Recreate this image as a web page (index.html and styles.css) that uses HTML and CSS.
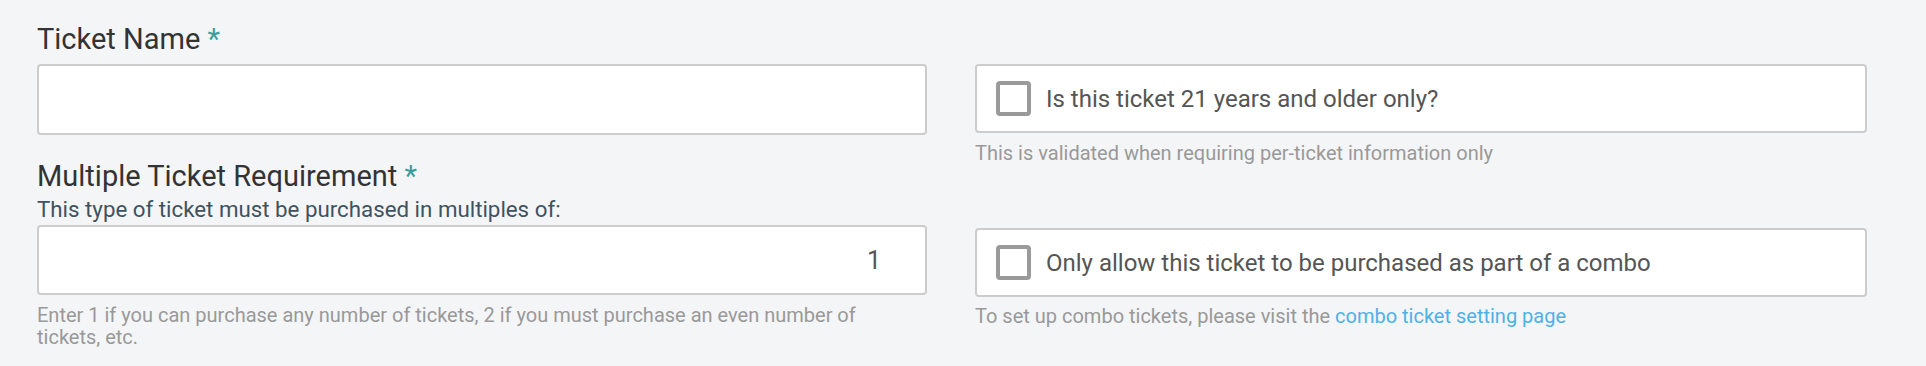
FILE: index.html
```html
<!DOCTYPE html>
<html lang="en">
<head>
<meta charset="utf-8">
<title>Ticket form</title>
<link rel="stylesheet" href="styles.css">
</head>
<body>
<div class="form">
  <div class="col col-left">
    <label class="field-label">Ticket Name <span class="req">*</span></label>
    <div class="input input-name"></div>

    <label class="field-label field-label-2">Multiple Ticket Requirement <span class="req">*</span></label>
    <div class="field-sub">This type of ticket must be purchased in multiples of:</div>
    <div class="input input-num"><span class="num">1</span></div>
    <p class="help help-left">Enter 1 if you can purchase any number of tickets, 2 if you must purchase an even number of tickets, etc.</p>
  </div>

  <div class="col col-right">
    <div class="check-box">
      <span class="checkbox"></span>
      <span class="check-label">Is this ticket 21 years and older only?</span>
    </div>
    <p class="help help-1">This is validated when requiring per-ticket information only</p>

    <div class="check-box check-box-2">
      <span class="checkbox"></span>
      <span class="check-label">Only allow this ticket to be purchased as part of a combo</span>
    </div>
    <p class="help help-2">To set up combo tickets, please visit the <a class="link" href="#">combo ticket setting page</a></p>
  </div>
</div>
</body>
</html>
```

FILE: styles.css
```css
html, body {
  margin: 0;
  padding: 0;
  background: #f4f5f7;
}

body {
  font-family: Roboto, "Liberation Sans", sans-serif;
  width: 1926px;
  height: 366px;
  overflow: hidden;
}

.form {
  display: flex;
  gap: 48px;
  padding: 22px 0 0 37px;
}

.col {
  display: flex;
  flex-direction: column;
}

.col-left {
  width: 890px;
}

.col-right {
  width: 892px;
  padding-top: 42px;
}

.field-label {
  display: block;
  font-size: 29px;
  line-height: 34px;
  color: #333333;
  margin-bottom: 8px;
}

.field-label-2 {
  margin-top: 24px;
  margin-bottom: 0;
}

.req {
  color: #3a9d9b;
}

.field-sub {
  font-size: 22.3px;
  line-height: 28px;
  color: #3e5361;
  margin: 2px 0 2px;
}

.input {
  box-sizing: border-box;
  background: #ffffff;
  border: 2px solid #cccccc;
  border-radius: 4px;
}

.input-name {
  height: 71px;
}

.input-num {
  height: 70px;
  display: flex;
  align-items: center;
  justify-content: flex-end;
  padding-right: 44px;
}

.num {
  font-size: 25px;
  color: #555555;
}

.help {
  margin: 9px 0 0;
  font-size: 20px;
  line-height: 22px;
  color: #999999;
}

.help-left {
  padding-right: 30px;
}

.help-2 {
  margin-top: 8px;
}

.link {
  color: #4cb2e6;
  text-decoration: none;
}

.check-box {
  box-sizing: border-box;
  height: 69px;
  background: #ffffff;
  border: 2px solid #cccccc;
  border-radius: 4px;
  display: flex;
  align-items: center;
  padding-left: 19px;
}

.check-box-2 {
  margin-top: 64px;
}

.checkbox {
  box-sizing: border-box;
  width: 35px;
  height: 35px;
  border: 4px solid #9a9a9a;
  border-radius: 4px;
  background: #ffffff;
  flex: none;
}

.check-label {
  margin-left: 15px;
  font-size: 24px;
  color: #555555;
}
```
